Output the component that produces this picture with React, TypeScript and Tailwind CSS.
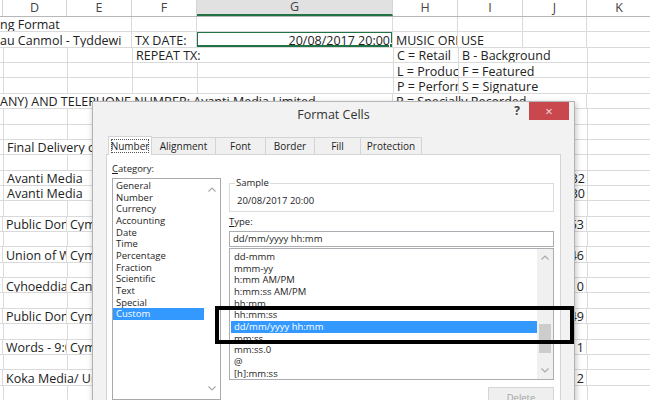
import React from "react";

const COL_W = [3, 64, 65, 65, 196, 65, 65, 64, 65];
const COL_NAMES = ["", "D", "E", "F", "G", "H", "I", "J", "K"];

type Cell = {
  c: number;
  span?: number;
  text: string;
  right?: boolean;
  tail?: boolean;
  flush?: boolean;
  selected?: boolean;
};

const ROWS: Cell[][] = [
  [{ c: 0, span: 3, text: "ng Format", flush: true }],
  [
    { c: 0, span: 3, text: "au Canmol - Tyddewi", flush: true },
    { c: 3, text: "TX DATE:" },
    { c: 4, text: "20/08/2017 20:00", right: true, selected: true },
    { c: 5, text: "MUSIC ORIGIN" },
    { c: 6, text: "USE" },
  ],
  [
    { c: 3, span: 2, text: "REPEAT TX:" },
    { c: 5, text: "C = Retail" },
    { c: 6, span: 2, text: "B - Background" },
  ],
  [
    { c: 5, text: "L = Production" },
    { c: 6, span: 2, text: "F = Featured" },
  ],
  [
    { c: 5, text: "P = Performance" },
    { c: 6, span: 2, text: "S = Signature" },
  ],
  [
    { c: 0, span: 5, text: "ANY) AND TELEPHONE NUMBER: Avanti Media Limited", flush: true },
    { c: 5, span: 3, text: "R = Specially Recorded" },
  ],
  [],
  [],
  [{ c: 1, span: 2, text: "Final Delivery of Music" }],
  [],
  [
    { c: 1, span: 2, text: "Avanti Media" },
    { c: 7, text: "1032", right: true },
  ],
  [
    { c: 1, span: 2, text: "Avanti Media" },
    { c: 7, text: "1030", right: true },
  ],
  [],
  [
    { c: 0, text: "Music", tail: true },
    { c: 1, text: "Public Domain" },
    { c: 2, text: "Cymraeg" },
    { c: 7, text: "1053", right: true },
  ],
  [],
  [
    { c: 0, text: "Ltd.", tail: true },
    { c: 1, text: "Union of Welsh" },
    { c: 2, text: "Cymraeg" },
    { c: 7, text: "1046", right: true },
  ],
  [],
  [
    { c: 0, text: "Sony", tail: true },
    { c: 1, text: "Cyhoeddiadau" },
    { c: 2, text: "Cana" },
    { c: 7, text: "1010", right: true },
  ],
  [],
  [
    { c: 0, text: "Lyra", tail: true },
    { c: 1, text: "Public Domain" },
    { c: 2, text: "Cymraeg" },
    { c: 7, text: "1049", right: true },
  ],
  [],
  [
    { c: 0, text: "Peter", tail: true },
    { c: 1, text: "Words - 9:00" },
    { c: 2, text: "Cymraeg" },
    { c: 7, text: "1011", right: true },
  ],
  [],
  [
    { c: 0, text: "Peter", tail: true },
    { c: 1, span: 2, text: "Koka Media/ Universal" },
    { c: 7, text: "1012", right: true },
  ],
  [],
];

const CATEGORIES = [
  "General",
  "Number",
  "Currency",
  "Accounting",
  "Date",
  "Time",
  "Percentage",
  "Fraction",
  "Scientific",
  "Text",
  "Special",
  "Custom",
];

const TYPES = [
  "dd-mmm",
  "mmm-yy",
  "h:mm AM/PM",
  "h:mm:ss AM/PM",
  "hh:mm",
  "hh:mm:ss",
  "dd/mm/yyyy hh:mm",
  "mm:ss",
  "mm:ss.0",
  "@",
  "[h]:mm:ss",
];

const TABS = [
  { label: "Number", w: "w-[44px]" },
  { label: "Alignment", w: "w-[65px]" },
  { label: "Font", w: "w-[51px]" },
  { label: "Border", w: "w-[50px]" },
  { label: "Fill", w: "w-[47px]" },
  { label: "Protection", w: "w-[62px]" },
];

function Chevron({ up }: { up?: boolean }) {
  return (
    <svg width="8" height="5" viewBox="0 0 8 5" className="block">
      <path
        d={up ? "M0.5 4.5 L4 1 L7.5 4.5" : "M0.5 0.5 L4 4 L7.5 0.5"}
        fill="none"
        stroke="#a8a8a8"
        strokeWidth="1.1"
      />
    </svg>
  );
}

function SheetRow({ cells }: { cells: Cell[] }) {
  const out: React.ReactNode[] = [];
  let i = 0;
  while (i < COL_W.length) {
    const cell = cells.find((x) => x.c === i);
    const span = cell?.span ?? 1;
    const w = COL_W.slice(i, i + span).reduce((a, b) => a + b, 0);
    out.push(
      <div
        key={i}
        style={{ width: w }}
        className={`relative flex h-full shrink-0 items-center overflow-hidden whitespace-nowrap border-r border-[#dadada] pt-[3px] ${
          cell?.right || cell?.tail ? "justify-end pr-[2px]" : cell?.flush ? "pl-0" : "pl-[3px]"
        } ${cell?.tail ? "pr-0" : ""}`}
      >
        {cell ? <span className="leading-none">{cell.text}</span> : null}
        {cell?.selected ? (
          <div className="absolute -inset-x-px -top-px bottom-0 border-2 border-[#217346]">
            <div className="absolute -bottom-[3px] -right-[3px] h-[5px] w-[5px] border border-white bg-[#217346]" />
          </div>
        ) : null}
      </div>
    );
    i += span;
  }
  return <div className="flex h-[15.36px] border-b border-[#dadada]">{out}</div>;
}

function Dialog() {
  return (
    <div className="absolute left-[92px] top-[101px] h-[310px] w-[483px] border border-[#b4b4b4] bg-[#f2f2f2] font-['Open_Sans',sans-serif] text-[#1e1e1e] shadow-[1px_2px_6px_rgba(0,0,0,0.25)]">
      <div className="grid h-[26px] grid-cols-[1fr_auto_1fr]">
        <div />
        <div className="self-center text-[12.5px] text-[#333]">Format Cells</div>
        <div className="flex items-start justify-end gap-[9px] pr-[5px]">
          <span className="mt-[1px] text-[12px] font-bold leading-[16px] text-[#444]">?</span>
          <div className="flex h-[18px] w-[40px] items-center justify-center bg-[#c9484d] text-[13px] leading-none text-[#f4dede]">
            ×
          </div>
        </div>
      </div>

      <div className="mx-[13px] mt-[8px]">
        <div className="flex items-end pl-[2px] text-[10px] leading-none">
          {TABS.map((t, i) =>
            i === 0 ? (
              <div
                key={t.label}
                className={`relative z-10 -mb-px flex h-[19px] ${t.w} shrink-0 items-center justify-center border-x border-t border-[#d4d4d4] bg-white px-[2px]`}
              >
                <span className="flex h-[14px] w-full items-center justify-center border border-dotted border-[#555]">
                  {t.label}
                </span>
              </div>
            ) : (
              <div
                key={t.label}
                className={`-ml-px flex h-[17px] ${t.w} shrink-0 items-center justify-center border-x border-t border-[#d4d4d4] bg-[#f0f0f0]`}
              >
                {t.label}
              </div>
            )
          )}
        </div>

        <div className="flex h-[260px] gap-[8px] border border-[#d4d4d4] bg-white pl-[5px] text-[9.5px]">
          <div className="flex w-[109px] shrink-0 flex-col">
            <div className="mt-[8px] leading-[12px]">
              <span className="underline">C</span>ategory:
            </div>
            <div className="mt-[3px] flex h-[222px] border border-[#a9a9a9] bg-white">
              <div className="flex-1 pt-[1px] leading-[11.67px]">
                {CATEGORIES.map((c) => (
                  <div
                    key={c}
                    className={`pl-[3px] ${c === "Custom" ? "bg-[#3399ff] text-white" : ""}`}
                  >
                    {c}
                  </div>
                ))}
              </div>
              <div className="flex w-[16px] flex-col items-center justify-between py-[8px]">
                <Chevron up />
                <Chevron />
              </div>
            </div>
          </div>

          <div className="flex w-[325px] shrink-0 flex-col">
            <fieldset className="mt-[22px] h-[35px] border border-[#dcdcdc] px-[7px]">
              <legend className="-ml-[2px] px-[1px] leading-[12px]">Sample</legend>
              <div className="mt-[6px] leading-[12px]">20/08/2017 20:00</div>
            </fieldset>
            <div className="mt-[4px] leading-[12px]">
              <span className="underline">T</span>ype:
            </div>
            <div className="mt-[3px] flex h-[16px] items-center border border-[#abadb3] pl-[3px]">
              dd/mm/yyyy hh:mm
            </div>
            <div className="mt-[1px] flex h-[132px] border border-[#abadb3]">
              <div className="flex-1 pl-[1px] pt-[2px] leading-[11.67px]">
                {TYPES.map((t, i) => (
                  <div key={t} className={`pl-[3px] ${i === 6 ? "bg-[#3399ff] text-white" : ""}`}>
                    {t}
                  </div>
                ))}
              </div>
              <div className="flex w-[16px] flex-col bg-[#f0f0f0]">
                <div className="flex h-[17px] items-center justify-center">
                  <Chevron up />
                </div>
                <div className="h-[58px]" />
                <div className="mx-[2px] h-[29px] bg-[#cdcdcd]" />
                <div className="flex-1" />
                <div className="flex h-[17px] items-center justify-center">
                  <Chevron />
                </div>
              </div>
            </div>
            <div className="mt-[7px] flex h-[22px] w-[66px] items-center justify-center self-end border border-[#d5d5d5] bg-[#efefef] text-[#a3a3a3]">
              Delete
            </div>
          </div>
        </div>
      </div>
    </div>
  );
}

export default function App() {
  return (
    <div className="relative h-[400px] w-[650px] overflow-hidden bg-white font-['Open_Sans',sans-serif] text-[12.5px] text-[#222]">
      <div className="flex h-[17px] border-b border-[#b7b7b7] text-[#444]">
        {COL_W.map((w, i) => (
          <div
            key={i}
            style={{ width: w }}
            className={`flex shrink-0 items-center justify-center border-r border-[#d4d4d4] leading-none ${
              COL_NAMES[i] === "G" ? "border-b-2 border-b-[#217346] bg-[#e1e1e1]" : "bg-white"
            }`}
          >
            {COL_NAMES[i]}
          </div>
        ))}
      </div>
      {ROWS.map((r, i) => (
        <SheetRow key={i} cells={r} />
      ))}

      <Dialog />

      <div className="absolute left-[215px] top-[306px] h-[38px] w-[359px] border-4 border-black" />
    </div>
  );
}
